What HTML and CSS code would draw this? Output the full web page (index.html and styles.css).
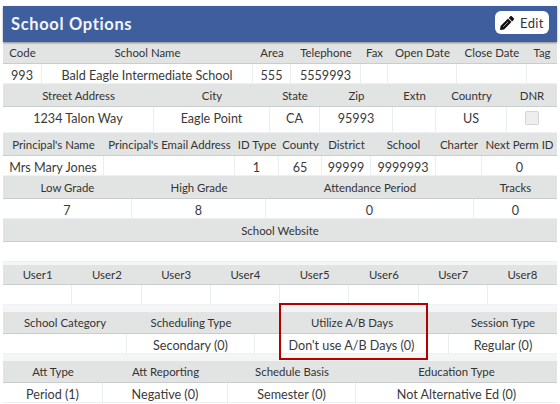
FILE: index.html
```html
<!DOCTYPE html>
<html lang="en">
<head>
  <meta charset="UTF-8">
  <meta name="viewport" content="width=device-width, initial-scale=1.0">
  <title>School Options</title>
  <link rel="stylesheet" href="styles.css">
</head>
<body>
  <div class="panel">
    <div class="panel-head">
      <h2>School Options</h2>
      <button type="button" class="edit-btn">
        <svg class="edit-icon" viewBox="0 0 512 512" aria-hidden="true">
          <path d="M497.9 142.1l-46.1 46.1c-4.7 4.7-12.3 4.7-17 0l-111-111c-4.7-4.7-4.7-12.3 0-17l46.1-46.1c18.7-18.7 49.1-18.7 67.9 0l60.1 60.1c18.8 18.7 18.8 49.1 0 67.9zM284.2 99.8L21.6 362.4.4 483.9c-2.9 16.4 11.4 30.6 27.8 27.8l121.5-21.3 262.6-262.6c4.7-4.7 4.7-12.3 0-17l-111-111c-4.8-4.7-12.4-4.7-17.1 0z"/>
          <path class="edit-icon-line" d="M120 392L300 212"/>
        </svg>
        Edit
      </button>
    </div>

    <div class="fields row-main">
      <div class="lbl">Code</div><div class="lbl">School Name</div><div class="lbl">Area</div><div class="lbl">Telephone</div><div class="lbl">Fax</div><div class="lbl">Open Date</div><div class="lbl">Close Date</div><div class="lbl">Tag</div>
      <div class="val">993</div><div class="val">Bald Eagle Intermediate School</div><div class="val">555</div><div class="val">5559993</div><div class="val"></div><div class="val"></div><div class="val"></div><div class="val"></div>
    </div>

    <div class="fields row-address tall">
      <div class="lbl">Street Address</div><div class="lbl">City</div><div class="lbl">State</div><div class="lbl">Zip</div><div class="lbl">Extn</div><div class="lbl">Country</div><div class="lbl">DNR</div>
      <div class="val">1234 Talon Way</div><div class="val">Eagle Point</div><div class="val">CA</div><div class="val">95993</div><div class="val"></div><div class="val">US</div><div class="val"><span class="check"></span></div>
    </div>

    <div class="fields row-principal">
      <div class="lbl">Principal's Name</div><div class="lbl">Principal's Email Address</div><div class="lbl">ID Type</div><div class="lbl">County</div><div class="lbl">District</div><div class="lbl">School</div><div class="lbl">Charter</div><div class="lbl">Next Perm ID</div>
      <div class="val">Mrs Mary Jones</div><div class="val"></div><div class="val">1</div><div class="val">65</div><div class="val">99999</div><div class="val">9999993</div><div class="val"></div><div class="val">0</div>
    </div>

    <div class="fields row-grades">
      <div class="lbl">Low Grade</div><div class="lbl">High Grade</div><div class="lbl">Attendance Period</div><div class="lbl">Tracks</div>
      <div class="val">7</div><div class="val">8</div><div class="val">0</div><div class="val">0</div>
    </div>

    <div class="fields row-web">
      <div class="lbl">School Website</div>
      <div class="val"></div>
    </div>

    <div class="fields row-user short">
      <div class="lbl">User1</div><div class="lbl">User2</div><div class="lbl">User3</div><div class="lbl">User4</div><div class="lbl">User5</div><div class="lbl">User6</div><div class="lbl">User7</div><div class="lbl">User8</div>
      <div class="val"></div><div class="val"></div><div class="val"></div><div class="val"></div><div class="val"></div><div class="val"></div><div class="val"></div><div class="val"></div>
    </div>

    <div class="fields row-category spaced">
      <div class="lbl">School Category</div><div class="lbl">Scheduling Type</div><div class="lbl">Utilize A/B Days</div><div class="lbl">Session Type</div>
      <div class="val"></div><div class="val">Secondary (0)</div><div class="val">Don't use A/B Days (0)</div><div class="val">Regular (0)</div>
    </div>

    <div class="fields row-att spaced">
      <div class="lbl">Att Type</div><div class="lbl">Att Reporting</div><div class="lbl">Schedule Basis</div><div class="lbl">Education Type</div>
      <div class="val">Period (1)</div><div class="val">Negative (0)</div><div class="val">Semester (0)</div><div class="val">Not Alternative Ed (0)</div>
    </div>

    <div class="highlight"></div>
  </div>
</body>
</html>
```

FILE: styles.css
```css
body {
  font-family: 'Lato', sans-serif;
  font-size: 12px;
  margin: 0;
  padding: 0;
  background-color: #fff;
  color: #333;
}
.panel {
  position: relative;
  margin: 6px 3px 0;
  background: #f5f5f5;
}
.panel-head {
  display: flex;
  justify-content: space-between;
  align-items: center;
  height: 36px;
  padding: 0 8px 1px 8px;
  box-sizing: border-box;
  background: #3f5e9e;
  box-shadow: 0 1px 2px rgba(0, 0, 0, 0.4);
  position: relative;
}
.panel-head h2 {
  margin: 0;
  font-size: 16.5px;
  font-weight: 700;
  letter-spacing: 0.65px;
  color: #f2f4f8;
}
.edit-btn {
  display: flex;
  align-items: center;
  gap: 6px;
  width: 54px;
  height: 23px;
  margin-bottom: 2px;
  padding: 0 0 0 5px;
  border: none;
  border-radius: 6px;
  background: #fff;
  font-family: inherit;
  font-size: 13px;
  letter-spacing: 0.4px;
  color: #333;
}
.edit-icon {
  width: 14px;
  height: 14px;
  fill: #111;
}
.edit-icon-line {
  stroke: #fff;
  stroke-width: 22;
}
.fields {
  display: grid;
  grid-template-rows: 23px 20px;
}
.row-main,
.spaced {
  grid-template-rows: 22px 20px;
}
.tall {
  grid-template-rows: 23px 26px;
}
.short {
  grid-template-rows: 20px 20px;
  margin-top: 3px;
}
.spaced {
  margin-top: 7px;
}
.row-main { grid-template-columns: 39px 211px 38px 70px 27px 69px 70px 30px; }
.row-address { grid-template-columns: 151px 116px 50px 73px 43px 71px 50px; }
.row-principal { grid-template-columns: 101px 131px 44px 43px 49px 65px 46px 75px; }
.row-grades { grid-template-columns: 129px 134px 208px 83px; }
.row-web { grid-template-columns: 1fr; }
.row-user { grid-template-columns: repeat(8, 1fr); }
.row-category { grid-template-columns: 124px 128px 194px 108px; }
.row-att { grid-template-columns: 100px 125px 128px 201px; }
.lbl {
  display: flex;
  align-items: center;
  justify-content: center;
  white-space: nowrap;
  font-size: 11.4px;
  background: #e2e4e3;
  border-bottom: 1px solid #c9cdcd;
  box-sizing: border-box;
}
.val {
  display: flex;
  align-items: center;
  justify-content: center;
  white-space: nowrap;
  font-size: 12.6px;
  padding-top: 3px;
  background: #fff;
  color: #3a3a3a;
  border-right: 1px solid #e9eef1;
  border-bottom: 1px solid #eef1f3;
  box-sizing: border-box;
}
.tall .val {
  padding-top: 0;
  padding-bottom: 3px;
}
.val:last-child {
  border-right: none;
}
.check {
  width: 12px;
  height: 12px;
  background: #eee;
  border: 1px solid #d5d5d5;
  border-radius: 2px;
}
.highlight {
  position: absolute;
  left: 276px;
  top: 297px;
  width: 149px;
  height: 57px;
  box-sizing: border-box;
  border: 2px solid #b30000;
}
```
